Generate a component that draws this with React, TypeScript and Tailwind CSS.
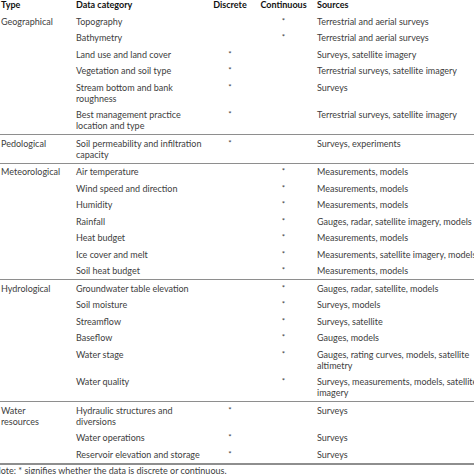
import React from "react";

type Row = {
  category: string[];
  discrete?: boolean;
  continuous?: boolean;
  sources: string[];
};

type Group = {
  type: string[];
  rows: Row[];
};

const groups: Group[] = [
  {
    type: ["Geographical"],
    rows: [
      { category: ["Topography"], continuous: true, sources: ["Terrestrial and aerial surveys"] },
      { category: ["Bathymetry"], continuous: true, sources: ["Terrestrial and aerial surveys"] },
      { category: ["Land use and land cover"], discrete: true, sources: ["Surveys, satellite imagery"] },
      { category: ["Vegetation and soil type"], discrete: true, sources: ["Terrestrial surveys, satellite imagery"] },
      { category: ["Stream bottom and bank", "roughness"], discrete: true, sources: ["Surveys"] },
      {
        category: ["Best management practice", "location and type"],
        discrete: true,
        sources: ["Terrestrial surveys, satellite imagery"],
      },
    ],
  },
  {
    type: ["Pedological"],
    rows: [
      {
        category: ["Soil permeability and infiltration", "capacity"],
        discrete: true,
        sources: ["Surveys, experiments"],
      },
    ],
  },
  {
    type: ["Meteorological"],
    rows: [
      { category: ["Air temperature"], continuous: true, sources: ["Measurements, models"] },
      { category: ["Wind speed and direction"], continuous: true, sources: ["Measurements, models"] },
      { category: ["Humidity"], continuous: true, sources: ["Measurements, models"] },
      { category: ["Rainfall"], continuous: true, sources: ["Gauges, radar, satellite imagery, models"] },
      { category: ["Heat budget"], continuous: true, sources: ["Measurements, models"] },
      { category: ["Ice cover and melt"], continuous: true, sources: ["Measurements, satellite imagery, models"] },
      { category: ["Soil heat budget"], continuous: true, sources: ["Measurements, models"] },
    ],
  },
  {
    type: ["Hydrological"],
    rows: [
      { category: ["Groundwater table elevation"], continuous: true, sources: ["Gauges, radar, satellite, models"] },
      { category: ["Soil moisture"], continuous: true, sources: ["Surveys, models"] },
      { category: ["Streamflow"], continuous: true, sources: ["Surveys, satellite"] },
      { category: ["Baseflow"], continuous: true, sources: ["Gauges, models"] },
      {
        category: ["Water stage"],
        continuous: true,
        sources: ["Gauges, rating curves, models, satellite", "altimetry"],
      },
      {
        category: ["Water quality"],
        continuous: true,
        sources: ["Surveys, measurements, models, satellite", "imagery"],
      },
    ],
  },
  {
    type: ["Water", "resources"],
    rows: [
      { category: ["Hydraulic structures and", "diversions"], discrete: true, sources: ["Surveys"] },
      { category: ["Water operations"], discrete: true, sources: ["Surveys"] },
      { category: ["Reservoir elevation and storage"], discrete: true, sources: ["Surveys"] },
    ],
  },
];

const Lines = ({ lines }: { lines: string[] }) => (
  <>
    {lines.map((l, i) => (
      <div key={i} className="h-[11px]">
        {l}
      </div>
    ))}
  </>
);

const Star = ({ on }: { on?: boolean }) => (
  <div className="h-[11px]">{on ? "*" : ""}</div>
);

export default function App() {
  const cell = "align-top whitespace-nowrap py-[2.75px] leading-[11px]";
  return (
    <div
      className="w-[474px] h-[474px] overflow-hidden bg-white text-[#404040] text-[9px]"
      style={{ fontFamily: "Lato, 'Open Sans', sans-serif" }}
    >
      <table className="table-fixed w-[487px] -mt-[3.5px]">
        <colgroup>
          <col className="w-[76px]" />
          <col className="w-[134px]" />
          <col className="w-[40px]" />
          <col className="w-[67px]" />
          <col className="w-[170px]" />
        </colgroup>
        <thead>
          <tr className="text-[#111]">
            <th className={`${cell} text-left font-bold pl-[1px]`}>Type</th>
            <th className={`${cell} text-left font-bold`}>Data category</th>
            <th className={`${cell} text-center font-bold`}>Discrete</th>
            <th className={`${cell} text-center font-bold`}>Continuous</th>
            <th className={`${cell} text-left font-bold`}>Sources</th>
          </tr>
        </thead>
        {groups.map((g, gi) => (
          <tbody key={gi} className={gi > 0 ? "border-t-[1.5px] border-[#8e8e8e]" : ""}>
            {g.rows.map((r, ri) => (
              <tr key={ri}>
                <td className={`${cell} pl-[1px]`}>{ri === 0 ? <Lines lines={g.type} /> : null}</td>
                <td className={cell}>
                  <Lines lines={r.category} />
                </td>
                <td className={`${cell} text-center text-[8px]`}>
                  <Star on={r.discrete} />
                </td>
                <td className={`${cell} text-center text-[8px]`}>
                  <Star on={r.continuous} />
                </td>
                <td className={cell}>
                  <Lines lines={r.sources} />
                </td>
              </tr>
            ))}
          </tbody>
        ))}
        <tbody className="border-t-[2px] border-[#8e8e8e]">
          <tr>
            <td colSpan={5} className="whitespace-nowrap pt-0 leading-[11px] -indent-[6px]">
              Note: * signifies whether the data is discrete or continuous.
            </td>
          </tr>
        </tbody>
      </table>
    </div>
  );
}
